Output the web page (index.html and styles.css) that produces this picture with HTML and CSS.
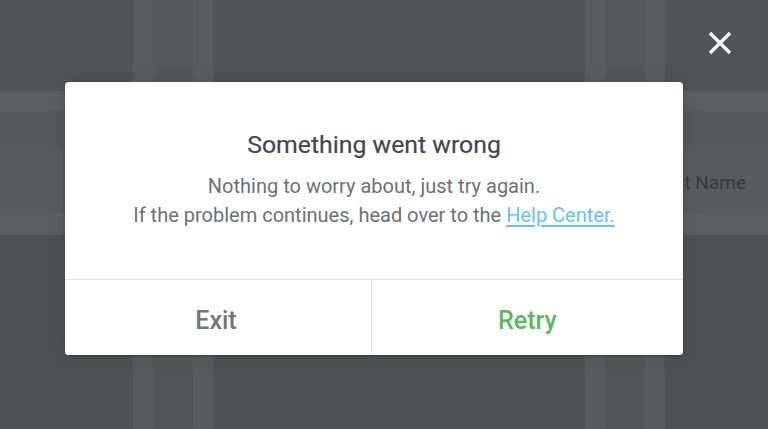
FILE: index.html
```html
<!DOCTYPE html>
<html lang="en">
<head>
<meta charset="utf-8">
<title>Something went wrong</title>
<link rel="stylesheet" href="styles.css">
</head>
<body>
<div class="page">
  <div class="p-top"></div>
  <div class="p-band"></div>
  <div class="p-sub"></div>
  <div class="p-row"><span class="p-label">First Name</span></div>
  <div class="p-band"></div>
  <div class="p-rest"></div>
  <div class="stripes"></div>
</div>
<div class="overlay">
  <button class="close" aria-label="Close">
    <svg width="26" height="26" viewBox="0 0 26 26"><path d="M3 3 L23 23 M23 3 L3 23" stroke="#fff" stroke-width="3.2" fill="none"/></svg>
  </button>
  <div class="dialog">
    <div class="dialog-body">
      <h2 class="title">Something went wrong</h2>
      <p class="msg">Nothing to worry about, just try again.<br>If the problem continues, head over to the <a href="#" class="link">Help Center.</a></p>
    </div>
    <div class="actions">
      <button class="btn btn-exit">Exit</button>
      <button class="btn btn-retry">Retry</button>
    </div>
  </div>
</div>
</body>
</html>
```
FILE: styles.css
```css
* { box-sizing: border-box; }
html, body { margin: 0; padding: 0; }
body {
  width: 768px;
  height: 429px;
  overflow: hidden;
  font-family: Roboto, "Liberation Sans", sans-serif;
  background: #505153;
  position: relative;
}
.page {
  position: relative;
  height: 429px;
  display: flex;
  flex-direction: column;
}
.p-top { height: 91px; background: #525355; }
.p-band { height: 20px; background: #5d5e5f; }
.p-sub { height: 39px; background: #57585a; }
.p-row {
  height: 65px;
  background: #5a5b5c;
  border-bottom: 1px solid #636465;
  display: flex;
  align-items: center;
  justify-content: flex-end;
  padding-right: 22px;
}
.p-label { font-size: 19px; color: #393b3e; font-weight: 400; }
.p-rest { flex: 1; background: #505153; }
.stripes {
  position: absolute;
  inset: 0;
  background: linear-gradient(to right,
    transparent 0 133px,
    rgba(255,255,255,0.05) 133px 153px,
    rgba(255,255,255,0.025) 153px 193px,
    rgba(255,255,255,0.05) 193px 213px,
    transparent 213px 585px,
    rgba(255,255,255,0.05) 585px 605px,
    rgba(255,255,255,0.025) 605px 645px,
    rgba(255,255,255,0.05) 645px 665px,
    transparent 665px);
}
.overlay {
  position: absolute;
  inset: 0;
  padding: 82px 0 0 65px;
}
.close {
  position: absolute;
  top: 30px;
  left: 707px;
  width: 26px;
  height: 26px;
  padding: 0;
  border: 0;
  background: none;
  display: block;
}
.close svg { display: block; }
.dialog {
  width: 618px;
  height: 273px;
  background: #fff;
  border-radius: 4px;
  box-shadow: 0 1px 2px rgba(0,0,0,0.25), 0 0 18px rgba(0,0,0,0.12);
  display: flex;
  flex-direction: column;
  overflow: hidden;
}
.dialog-body {
  height: 198px;
  padding-top: 48px;
  text-align: center;
  border-bottom: 1px solid #dfe2e5;
}
.title {
  margin: 0;
  font-size: 24.8px;
  line-height: 30px;
  font-weight: 400;
  color: #43474d;
  -webkit-text-stroke: 0.2px #43474d;
}
.msg {
  margin: 12px 0 0;
  font-size: 20px;
  line-height: 29px;
  color: #6b7179;
}
.link { color: #62c4f0; text-decoration: underline; text-underline-offset: 3px; }
.actions {
  flex: 1;
  display: flex;
}
.btn {
  border: 0;
  background: #fff;
  font-family: inherit;
  font-size: 25px;
  font-weight: 500;
  padding: 5px 0 0;
}
.btn-exit { width: 307px; padding-right: 4px; color: #6e7680; border-right: 1px solid #dfe2e5; }
.btn-retry { flex: 1; color: #5cb85c; }
```
